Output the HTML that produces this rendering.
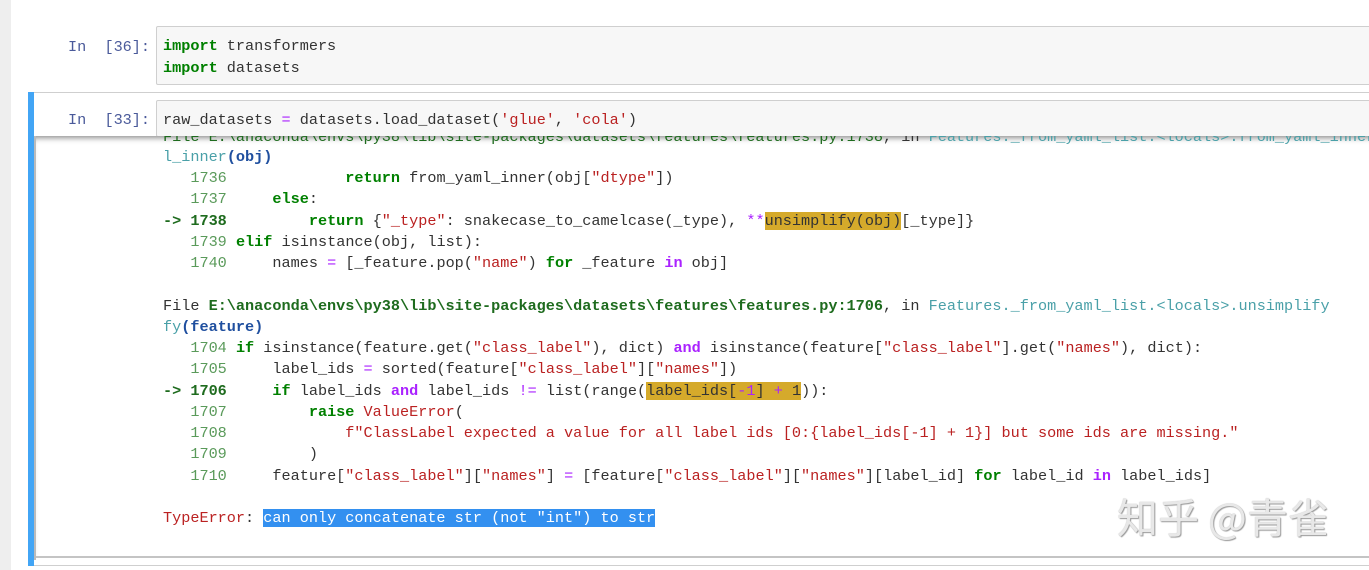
<!DOCTYPE html>
<html><head><meta charset="utf-8"><style>
*{margin:0;padding:0;box-sizing:border-box}
body{width:1369px;height:570px;overflow:hidden;background:#fff;position:relative;font-family:"Liberation Mono","Noto Sans CJK SC",monospace;font-size:15.2px;color:#333}
.strip{position:absolute;left:0;top:0;width:11px;height:570px;background:#eeeeee}
.pr{position:absolute;color:#4a5a9a;white-space:pre}
.box{position:absolute;background:#f7f7f7;border:1px solid #cfcfcf;border-radius:2px}
.l{position:absolute;white-space:pre;line-height:21px;height:21px}
.k{color:#008000;font-weight:bold}
.s{color:#ba2121}
.n{color:#5a9a5a}
.a{color:#1e6b1e;font-weight:bold}
.p{color:#aa22ff;font-weight:bold}
.c{color:#4aa0a8}
.b{color:#1f4f9f;font-weight:bold}
.f{color:#1e6b1e}
.fb{color:#1e6b1e;font-weight:bold}
.e{color:#b22}
.h{background:#d5aa2b}
.sel{background:#3390f0;color:#fff}
.out{position:absolute;left:36px;top:136px;width:1340px;height:422px;overflow:hidden;background:#fff;border-bottom:2px solid #c4c4c4;box-shadow:inset 0 6px 6px -4px rgba(0,0,0,.45)}
</style></head><body>
<div class="strip"></div>
<div class="pr" style="left:68px;top:37px;line-height:21px">In  [36]:</div>
<div class="box" style="left:156px;top:26px;width:1220px;height:59px"></div>
<div class="l" style="left:163px;top:36px"><span class="k">import</span> transformers</div>
<div class="l" style="left:163px;top:58px"><span class="k">import</span> datasets</div>
<div style="position:absolute;left:28px;top:92px;width:6px;height:474px;background:#42a5f5"></div>
<div style="position:absolute;left:34px;top:92px;width:1340px;height:1px;background:#cfcfcf"></div>
<div style="position:absolute;left:34px;top:565px;width:1340px;height:1px;background:#cfcfcf"></div>
<div style="position:absolute;left:34px;top:136px;width:2px;height:424px;background:#bbb"></div>
<div class="pr" style="left:68px;top:110px;line-height:21px">In  [33]:</div>
<div class="box" style="left:156px;top:100px;width:1220px;height:37px"></div>
<div class="l" style="left:163px;top:110px">raw_datasets <span style="color:#a2f">=</span> datasets.load_dataset(<span class="s">'glue'</span>, <span class="s">'cola'</span>)</div>
<div class="out">
<div class="l" style="left:127px;top:-9px"><span class="f">File E:\anaconda\envs\py38\lib\site-packages\datasets\features\features.py:1738</span>, in <span class="c">Features._from_yaml_list.&lt;locals&gt;.from_yaml_inner</span></div>
<div class="l" style="left:127px;top:11px"><span class="c">l_inner</span><span class="b">(obj)</span></div>
<div class="l" style="left:127px;top:32px"><span class="n">   1736</span>             <span class="k">return</span> from_yaml_inner(obj[<span class="s">"dtype"</span>])</div>
<div class="l" style="left:127px;top:53px"><span class="n">   1737</span>     <span class="k">else</span>:</div>
<div class="l" style="left:127px;top:75px"><span class="a">-&gt; 1738</span>         <span class="k">return</span> {<span class="s">"_type"</span>: snakecase_to_camelcase(_type), <span style="color:#a2f">**</span><span class="h">unsimplify(obj)</span>[_type]}</div>
<div class="l" style="left:127px;top:96px"><span class="n">   1739</span> <span class="k">elif</span> isinstance(obj, list):</div>
<div class="l" style="left:127px;top:117px"><span class="n">   1740</span>     names <span style="color:#a2f">=</span> [_feature.pop(<span class="s">"name"</span>) <span class="k">for</span> _feature <span class="p">in</span> obj]</div>
<div class="l" style="left:127px;top:160px">File <span class="fb">E:\anaconda\envs\py38\lib\site-packages\datasets\features\features.py:1706</span>, in <span class="c">Features._from_yaml_list.&lt;locals&gt;.unsimplify</span></div>
<div class="l" style="left:127px;top:181px"><span class="c">fy</span><span class="b">(feature)</span></div>
<div class="l" style="left:127px;top:202px"><span class="n">   1704</span> <span class="k">if</span> isinstance(feature.get(<span class="s">"class_label"</span>), dict) <span class="p">and</span> isinstance(feature[<span class="s">"class_label"</span>].get(<span class="s">"names"</span>), dict):</div>
<div class="l" style="left:127px;top:223px"><span class="n">   1705</span>     label_ids <span style="color:#a2f">=</span> sorted(feature[<span class="s">"class_label"</span>][<span class="s">"names"</span>])</div>
<div class="l" style="left:127px;top:245px"><span class="a">-&gt; 1706</span>     <span class="k">if</span> label_ids <span class="p">and</span> label_ids <span style="color:#a2f">!=</span> list(range(<span class="h">label_ids[<span style="color:#a2f">-1</span>] <span style="color:#a2f">+</span> 1</span>)):</div>
<div class="l" style="left:127px;top:266px"><span class="n">   1707</span>         <span class="k">raise</span> <span class="e">ValueError</span>(</div>
<div class="l" style="left:127px;top:287px"><span class="n">   1708</span>             <span class="s">f"ClassLabel expected a value for all label ids [0:{label_ids[-1] + 1}] but some ids are missing."</span></div>
<div class="l" style="left:127px;top:308px"><span class="n">   1709</span>         )</div>
<div class="l" style="left:127px;top:330px"><span class="n">   1710</span>     feature[<span class="s">"class_label"</span>][<span class="s">"names"</span>] <span style="color:#a2f">=</span> [feature[<span class="s">"class_label"</span>][<span class="s">"names"</span>][label_id] <span class="k">for</span> label_id <span class="p">in</span> label_ids]</div>
<div class="l" style="left:127px;top:372px"><span class="e">TypeError</span>: <span class="sel">can only concatenate str (not "int") to str</span></div>
<div style="position:absolute;left:1081px;top:349px;font-family:'Noto Sans CJK SC',sans-serif;font-size:41px;color:#e8e8e8;text-shadow:1px 1px 1px #999,0 0 1px #aaa;white-space:pre">知乎 @青雀</div>
</div>
</body></html>
